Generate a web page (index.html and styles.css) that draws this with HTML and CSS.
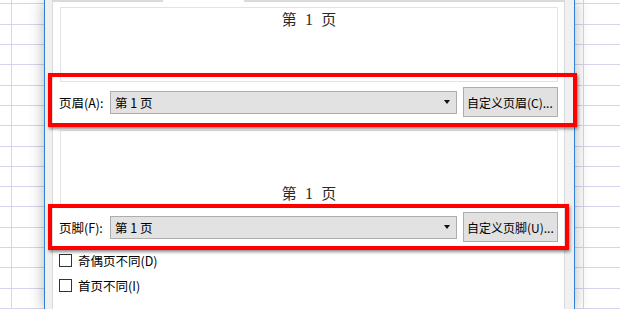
FILE: index.html
```html
<!DOCTYPE html>
<html lang="zh-CN">

<head>
    <meta charset="UTF-8">
    <meta name="viewport" content="width=device-width, initial-scale=1.0">
    <title>页面设置</title>

    <link rel="stylesheet" href="styles.css">
</head>

<body>
    <div class="sheet sheet-left"></div>

    <div class="dialog">
        <div class="page">
            <div class="preview preview-head">
                <span class="preview-text">第 <b>1</b> 页</span>
            </div>

            <div class="field-row">
                <label class="field-label">页眉(A):</label>
                <div class="select">
                    <span>第 1 页</span>
                    <i class="arrow"></i>
                </div>
                <button class="btn">自定义页眉(C)...</button>
            </div>

            <div class="preview preview-foot">
                <span class="preview-text">第 <b>1</b> 页</span>
            </div>

            <div class="field-row">
                <label class="field-label">页脚(F):</label>
                <div class="select">
                    <span>第 1 页</span>
                    <i class="arrow"></i>
                </div>
                <button class="btn">自定义页脚(U)...</button>
            </div>

            <div class="checks">
                <label class="check"><span class="box"></span>奇偶页不同(D)</label>
                <label class="check"><span class="box"></span>首页不同(I)</label>
            </div>
        </div>
    </div>

    <div class="sheet sheet-right"></div>

    <div class="mark mark-head"></div>
    <div class="mark mark-foot"></div>
</body>

</html>
```

FILE: styles.css
```css
* {
    box-sizing: border-box;
}

body {
    margin: 0;
    width: 620px;
    height: 309px;
    overflow: hidden;
    display: flex;
    font-family: "Noto Sans CJK SC", "Noto Sans", sans-serif;
    font-size: 12px;
    color: #000;
    background: #fff;
    position: relative;
}

.sheet-left {
    width: 44px;
    height: 100%;
    background:
        linear-gradient(to right, #d4d4ec, #d4d4ec) 11px 0 / 1px 100% no-repeat,
        repeating-linear-gradient(to bottom, transparent 0 3.5px, #d4d4ec 3.5px 4.5px, transparent 4.5px 20.3px),
        #fff;
}

.sheet-right {
    flex: 1;
    height: 100%;
    background:
        linear-gradient(to right, #d4d4ec, #d4d4ec) 8px 0 / 1px 100% no-repeat,
        repeating-linear-gradient(to bottom, transparent 0 3.5px, #d4d4ec 3.5px 4.5px, transparent 4.5px 20.3px),
        #fff;
}

.dialog {
    width: 531px;
    height: 100%;
    padding: 0 9px 0 7px;
    background: #f0f0f0;
    border-left: 1px solid #2f7fd6;
    border-right: 1px solid #2f7fd6;
    box-shadow: 0 0 14px rgba(0, 0, 0, 0.3);
    z-index: 1;
}

.page {
    height: 100%;
    padding: 7px 6px 0 6px;
    border-left: 1px solid #dadada;
    border-right: 1px solid #dadada;
    background:
        linear-gradient(to right, #dadada 110px, transparent 110px 191px, #dadada 191px) 0 0 / 100% 2px no-repeat,
        #fff;
}

.preview {
    display: flex;
    justify-content: center;
    margin-left: 1px;
    border: 1px solid #e3e3e3;
    color: #2a2a2a;
}

.preview-head {
    height: 75px;
    align-items: flex-start;
    padding-top: 1px;
}

.preview-foot {
    height: 77px;
    margin-top: 13px;
    align-items: flex-end;
    padding-bottom: 2px;
}

.preview-text {
    font-size: 15px;
    line-height: 20px;
    word-spacing: 5px;
}

.preview-text b {
    font-family: "Liberation Serif", serif;
    font-weight: normal;
    font-size: 16px;
}

.field-row {
    display: flex;
    align-items: center;
    height: 30px;
    margin-top: 5px;
}

.field-label {
    width: 51px;
    white-space: nowrap;
    font-size: 12.5px;
}

.select {
    width: 347px;
    height: 23px;
    display: flex;
    align-items: center;
    justify-content: space-between;
    padding: 0 6px 0 4px;
    background: #e2e2e2;
    border: 1px solid #adadad;
    font-size: 12.5px;
}

.arrow {
    width: 0;
    height: 0;
    border-left: 3.5px solid transparent;
    border-right: 3.5px solid transparent;
    border-top: 4px solid #111;
}

.btn {
    all: unset;
    box-sizing: border-box;
    width: 95px;
    height: 30px;
    margin-left: 6px;
    padding-left: 3px;
    display: flex;
    align-items: center;
    background: #e1e1e1;
    border: 1px solid #adadad;
    font-size: 12px;
    white-space: nowrap;
}

.checks {
    display: flex;
    flex-direction: column;
    gap: 5px;
    margin-top: 8px;
}

.check {
    display: flex;
    align-items: center;
    gap: 6px;
    height: 20px;
    font-size: 12.5px;
}

.box {
    width: 13px;
    height: 13px;
    border: 1px solid #333;
    background: #fff;
}

.mark {
    position: absolute;
    left: 48px;
    border: 4px solid #f00;
    box-shadow: 1px 2px 3px rgba(0, 0, 0, 0.45);
    z-index: 2;
}

.mark-head {
    top: 73px;
    width: 529px;
    height: 54px;
}

.mark-foot {
    top: 204px;
    width: 521px;
    height: 46px;
}
```
